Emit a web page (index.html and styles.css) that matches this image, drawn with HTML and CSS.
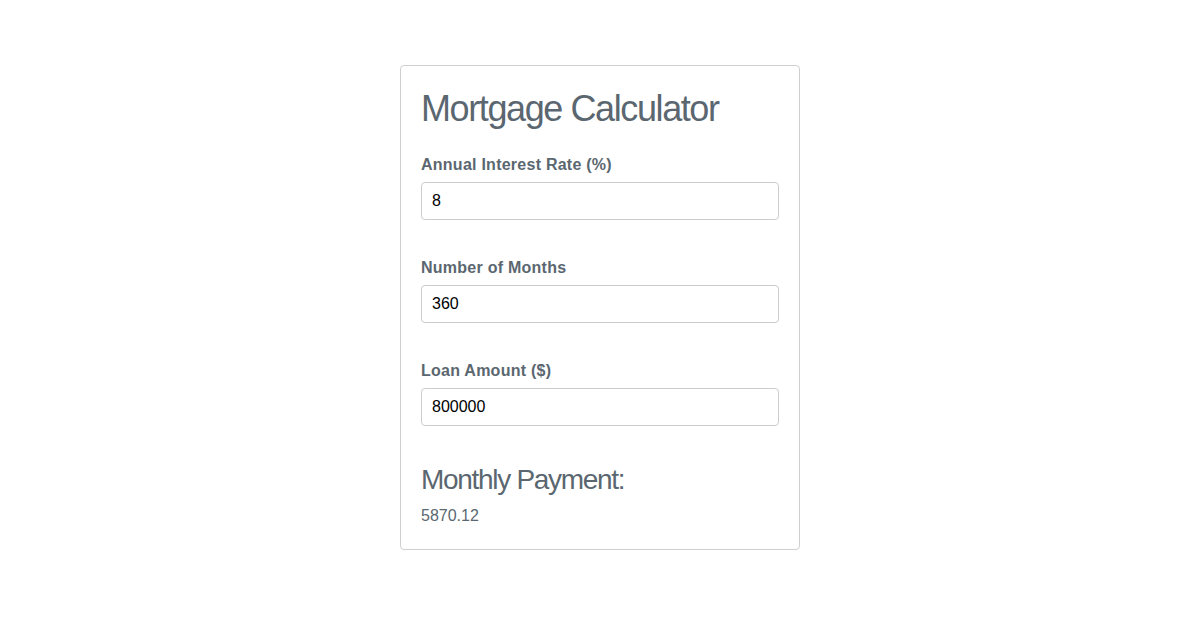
FILE: index.html
```html
<!DOCTYPE html>
<html>
<head>
<meta charset="utf-8">
<link rel="stylesheet" href="styles.css">
</head>
<body>
<div class="page">
  <div class="card">
    <h1 class="title">Mortgage Calculator</h1>
    <div class="field">
      <label class="label">Annual Interest Rate (%)</label>
      <input class="input" type="text" value="8">
    </div>
    <div class="field">
      <label class="label">Number of Months</label>
      <input class="input" type="text" value="360">
    </div>
    <div class="field">
      <label class="label">Loan Amount ($)</label>
      <input class="input" type="text" value="800000">
    </div>
    <h2 class="result-title">Monthly Payment:</h2>
    <div class="result">5870.12</div>
  </div>
</div>
</body>
</html>
```
FILE: styles.css
```css
html, body {
  margin: 0;
  padding: 0;
  background: #fff;
  font-family: "Liberation Sans", Arial, sans-serif;
}
.page {
  display: flex;
  justify-content: center;
  padding-top: 65px;
}
.card {
  width: 358px;
  padding: 20px 20px 23px;
  border: 1px solid #cfcfcf;
  border-radius: 4px;
  color: #5b6770;
  display: flex;
  flex-direction: column;
}
.title {
  margin: 3px 0 0;
  font-size: 36px;
  font-weight: normal;
  line-height: 40px;
  letter-spacing: -1.4px;
}
.field {
  display: flex;
  flex-direction: column;
  margin-top: 26px;
}
.field + .field {
  margin-top: 38px;
}
.label {
  font-size: 16px;
  font-weight: bold;
  line-height: 20px;
  letter-spacing: 0.25px;
  margin-bottom: 7px;
}
.input {
  box-sizing: border-box;
  height: 38px;
  border: 1px solid #cccccc;
  border-radius: 4px;
  padding: 0 10px;
  font-family: "Liberation Sans", Arial, sans-serif;
  font-size: 16px;
  color: #000;
  background: #fff;
}
.result-title {
  margin: 38px 0 0;
  font-size: 28px;
  font-weight: normal;
  line-height: 32px;
  letter-spacing: -1.3px;
}
.result {
  margin-top: 10px;
  font-size: 16px;
  line-height: 20px;
}
```
